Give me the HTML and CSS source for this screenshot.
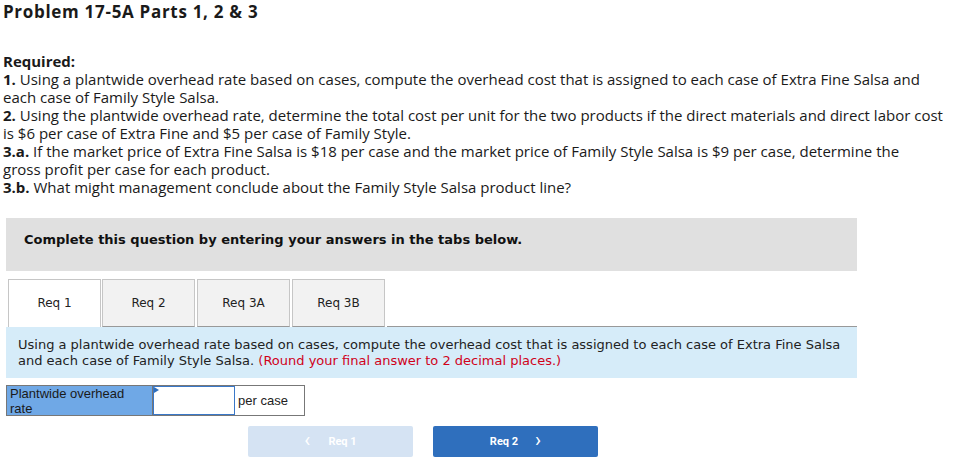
FILE: index.html
```html
<!DOCTYPE html>
<html>
<head>
<meta charset="utf-8">
<link rel="stylesheet" href="styles.css">
</head>
<body>
<h1 class="title">Problem 17-5A Parts 1, 2 &amp; 3</h1>
<div class="required">
<p><b>Required:</b></p>
<p><b>1.</b> Using a plantwide overhead rate based on cases, compute the overhead cost that is assigned to each case of Extra Fine Salsa and<br>each case of Family Style Salsa.</p>
<p><b>2.</b> Using the plantwide overhead rate, determine the total cost per unit for the two products if the direct materials and direct labor cost<br>is $6 per case of Extra Fine and $5 per case of Family Style.</p>
<p><b>3.a.</b> If the market price of Extra Fine Salsa is $18 per case and the market price of Family Style Salsa is $9 per case, determine the<br>gross profit per case for each product.</p>
<p><b>3.b.</b> What might management conclude about the Family Style Salsa product line?</p>
</div>
<div class="panel">
  <div class="banner">Complete this question by entering your answers in the tabs below.</div>
  <div class="tabs">
    <div class="tab active">Req 1</div>
    <div class="tab">Req 2</div>
    <div class="tab">Req 3A</div>
    <div class="tab">Req 3B</div>
    <div class="tab-fill"></div>
  </div>
  <div class="info">Using a plantwide overhead rate based on cases, compute the overhead cost that is assigned to each case of Extra Fine Salsa and each case of Family Style Salsa. <span class="red">(Round your final answer to 2 decimal places.)</span></div>
  <div class="answer">
    <div class="label">Plantwide overhead rate</div>
    <div class="input"><span class="flag"></span></div>
    <div class="unit">per case</div>
  </div>
  <div class="nav">
    <div class="btn prev"><span class="chev">&lsaquo;</span>Req 1</div>
    <div class="btn next">Req 2<span class="chev">&rsaquo;</span></div>
  </div>
</div>
</body>
</html>
```
FILE: styles.css
```css
body {
  margin: 0;
  padding: 0 3px;
  background: #fff;
  color: #1a1a1a;
  font-family: "Open Sans", Lato, sans-serif;
}
.title {
  margin: 0;
  padding-top: 2px;
  font-size: 17px;
  line-height: 20px;
  font-weight: 700;
  letter-spacing: 0.7px;
  height: 20px;
}
.required {
  margin-top: 30px;
  width: 957px;
  font-size: 15px;
  line-height: 18px;
}
.required p { margin: 0; }
.panel {
  margin-top: 22px;
  width: 851px;
  padding-left: 3px;
  font-family: "DejaVu Sans", Verdana, sans-serif;
}
.banner {
  background: #e0e0e0;
  height: 53px;
  box-sizing: border-box;
  padding: 14px 0 0 18px;
  font-size: 13px;
  font-weight: 700;
  color: #111;
  line-height: 16px;
}
.tabs {
  display: flex;
  margin-top: 8px;
  height: 48px;
  padding-left: 2px;
}
.tab {
  width: 93px;
  box-sizing: border-box;
  border: 1px solid #c6c6c6;
  border-bottom: 1px solid #999;
  background: #f2f2f2;
  margin-right: 2px;
  font-size: 12px;
  color: #222;
  text-align: center;
  line-height: 46px;
}
.tab.active {
  background: #fff;
  border-bottom: none;
  margin-right: 1px;
  position: relative;
  z-index: 1;
}
.tab-fill {
  flex: 1;
  border-bottom: 1px solid #999;
}
.info {
  background: #d6ecf9;
  height: 51px;
  box-sizing: border-box;
  padding: 10px 12px 0 12px;
  font-size: 13px;
  line-height: 16px;
  color: #222;
}
.red { color: #d0021b; }
.answer {
  display: flex;
  margin-top: 7px;
  height: 31px;
  width: 299px;
  box-sizing: border-box;
  border: 1px solid #777;
  font-family: "Liberation Sans", Arial, sans-serif;
  font-size: 13px;
  color: #222;
}
.label {
  width: 146px;
  background: #6fa8e6;
  border-right: 1px solid #777;
  padding: 0 3px;
  box-sizing: border-box;
  line-height: 15px;
  color: #1a1a1a;
}
.input {
  width: 82px;
  border: 1px solid #3a78c8;
  box-sizing: border-box;
  background: #fff;
  position: relative;
}
.flag {
  position: absolute;
  left: 0;
  top: 0;
  width: 0;
  height: 0;
  border-top: 3px solid transparent;
  border-bottom: 3px solid transparent;
  border-left: 5px solid #2f6fbd;
}
.unit {
  flex: 1;
  padding-left: 3px;
  line-height: 29px;
}
.nav {
  display: flex;
  margin-top: 10px;
  padding-left: 242px;
  gap: 20px;
}
.btn {
  width: 165px;
  height: 31px;
  border-radius: 2px;
  display: flex;
  align-items: center;
  justify-content: center;
  font-family: Roboto, sans-serif;
  font-weight: 700;
  font-size: 11px;
  color: #fff;
}
.prev { background: #d5e3f3; }
.next { background: #2f6fbd; }
.chev {
  font-size: 20px;
  font-weight: 400;
  line-height: 1;
  margin-top: -3px;
}
.prev .chev { margin-right: 18px; }
.next .chev { margin-left: 17px; }
```
